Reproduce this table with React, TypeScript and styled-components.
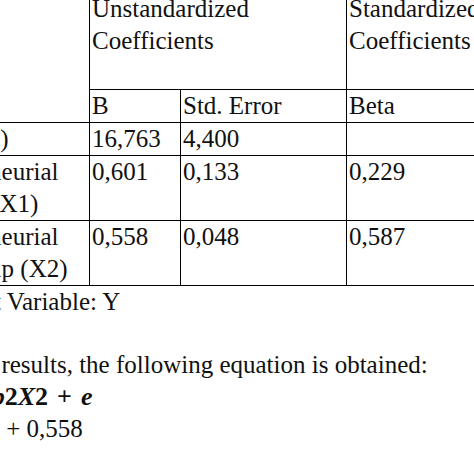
import React from "react";
import styled, { createGlobalStyle } from "styled-components";

const GlobalStyle = createGlobalStyle`
  html, body {
    margin: 0;
    padding: 0;
    background: #fff;
  }
`;

type Row = {
  label: string;
  b: string;
  se: string;
  beta: string;
};

const rows: Row[] = [
  { label: "(Constant)", b: "16,763", se: "4,400", beta: "" },
  { label: "Entrepreneurial Attitude (X1)", b: "0,601", se: "0,133", beta: "0,229" },
  { label: "Entrepreneurial Leadership (X2)", b: "0,558", se: "0,048", beta: "0,587" },
];

const App: React.FC = () => {
  return (
    <Page>
      <GlobalStyle />
      <TableWrap>
        <Table>
          <colgroup>
            <Col $w={189} />
            <Col $w={91} />
            <Col $w={166} />
            <Col $w={200} />
          </colgroup>
          <thead>
            <tr>
              <Cell rowSpan={2}>Model</Cell>
              <Cell colSpan={2} $tall>
                Unstandardized
                <br />
                Coefficients
              </Cell>
              <Cell $tall>
                Standardized
                <br />
                Coefficients
              </Cell>
            </tr>
            <tr>
              <Cell>B</Cell>
              <Cell>Std. Error</Cell>
              <Cell>Beta</Cell>
            </tr>
          </thead>
          <tbody>
            {rows.map((r) => (
              <tr key={r.label}>
                <Cell>{r.label}</Cell>
                <Cell>{r.b}</Cell>
                <Cell>{r.se}</Cell>
                <Cell>{r.beta}</Cell>
              </tr>
            ))}
          </tbody>
        </Table>
      </TableWrap>

      <Notes>
        <Line $shift={-131}>a. Dependent Variable: Y</Line>
        <Line $shift={-243} $gap>
          Based on the regression results, the following equation is obtained:
        </Line>
        <Equation $shift={-192}>
          <Var>Y</Var>
          <Op>=</Op>
          <Var>a</Var>
          <Op>+</Op>
          <Var>b</Var>
          <Num>1</Num>
          <Var>X</Var>
          <Num>1</Num>
          <Op>+</Op>
          <Var>b</Var>
          <Num>2</Num>
          <Var>X</Var>
          <Num>2</Num>
          <Op>+</Op>
          <Var>e</Var>
        </Equation>
        <Line $shift={-226}>Y = 16,763 + 0,601X1 + 0,558</Line>
      </Notes>
    </Page>
  );
};

export default App;

const Page = styled.div`
  width: 474px;
  height: 474px;
  overflow: hidden;
  background: #fff;
  color: #111;

  font-family: "Liberation Serif", "Times New Roman", serif;
  font-size: 25px;
  line-height: 32px;
`;

const TableWrap = styled.div`
  margin-left: -100px;
  margin-top: -8px;
`;

const Table = styled.table`
  border-collapse: collapse;
  table-layout: fixed;
  width: 646px;
`;

const Col = styled.col<{ $w: number }>`
  width: ${(p) => p.$w}px;
`;

const Cell = styled.td<{ $tall?: boolean }>`
  border: 1px solid #000;
  padding: 0 2px;
  vertical-align: top;
  text-align: left;
  font-weight: normal;
  height: ${(p) => (p.$tall ? "96px" : "auto")};
`;

const Notes = styled.div`
  display: flex;
  flex-direction: column;
  white-space: nowrap;
`;

const Line = styled.div<{ $shift: number; $gap?: boolean }>`
  margin-left: ${(p) => p.$shift}px;
  margin-top: ${(p) => (p.$gap ? "31px" : "0")};
`;

const Equation = styled.div<{ $shift: number }>`
  margin-left: ${(p) => p.$shift}px;
  display: flex;
  align-items: baseline;
  font-size: 26px;
  font-weight: bold;
`;

const Var = styled.span`
  font-style: italic;
`;

const Num = styled.span`
  font-style: normal;
`;

const Op = styled.span`
  font-style: normal;
  margin: 0 9px;
`;
